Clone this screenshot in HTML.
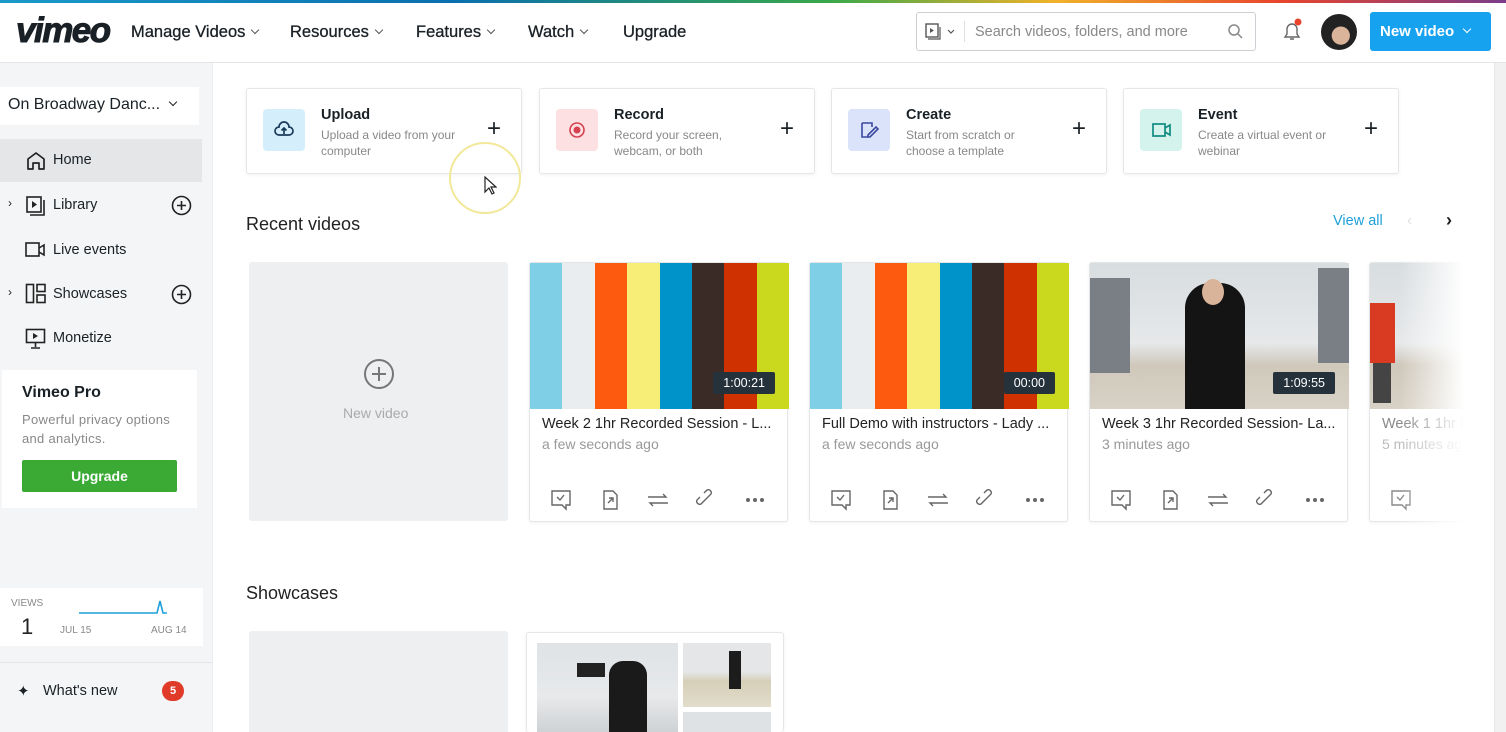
<!DOCTYPE html>
<html><head><meta charset="utf-8"><style>
*{box-sizing:border-box;margin:0;padding:0}
html,body{width:1506px;height:732px;overflow:hidden}
body{background:#fff;font-family:"Liberation Sans",Arial,sans-serif;position:relative;color:#1a2126}
.a{position:absolute}
.topbar{left:0;top:0;width:1506px;height:3px;background:linear-gradient(90deg,#1a9ac9,#0a6fb0 30%,#38a84a 55%,#f1b22a 70%,#e8452c 85%,#7a3c8a)}
.hdr{left:0;top:3px;width:1506px;height:60px;border-bottom:1px solid #e3e5e8}
.nav{top:23px;font-size:16.5px;color:#1a2126;font-weight:normal;-webkit-text-stroke:.3px #1a2126}
.chev{display:inline-block;width:6px;height:6px;border-right:1.3px solid #555;border-bottom:1.3px solid #555;transform:rotate(45deg);margin-left:7px;position:relative;top:-4px;-webkit-text-stroke:0}
.side{left:0;top:63px;width:213px;height:669px;background:#f4f5f6;border-right:1px solid #eceef0}
.si{left:25px;font-size:14.5px;color:#1a2126}
.card{background:#fff;border:1px solid #e4e6e8;border-radius:3px;box-shadow:0 1px 3px rgba(0,0,0,.06)}
.ac .ic{position:absolute;left:16px;top:20px;width:42px;height:42px;border-radius:4px}
.ac .t{position:absolute;left:74px;top:18px;font-size:14.5px;font-weight:700}
.ac .d{position:absolute;left:74px;top:38px;font-size:12px;color:#888;line-height:16px;width:150px}
.ac .p{position:absolute;right:20px;top:26px;font-size:24px;font-weight:300}
.vc{top:262px;width:259px;height:260px}
.th{position:absolute;left:0;top:0;width:259px;height:146px;overflow:hidden;display:flex}
.th i{flex:1}
.dur{position:absolute;right:12px;top:109px;background:#25323c;color:#fff;font-size:12.5px;padding:4px 10px;border-radius:2px}
.vt{position:absolute;left:12px;top:153px;font-size:14.5px;color:#222;white-space:nowrap}
.vs{position:absolute;left:12px;top:173px;font-size:14px;color:#999;white-space:nowrap}
.ico{position:absolute;top:225px}
</style></head><body>
<div class="a topbar"></div>
<div class="a hdr"></div>
<div class="a" style="left:16px;top:11px;font-size:35px;font-weight:900;font-style:italic;letter-spacing:-1.5px;font-family:'Liberation Sans',sans-serif;color:#1a2126;-webkit-text-stroke:1px #1a2126">vimeo</div>
<div class="a nav" style="left:131px">Manage Videos<span class="chev"></span></div>
<div class="a nav" style="left:290px">Resources<span class="chev"></span></div>
<div class="a nav" style="left:416px">Features<span class="chev"></span></div>
<div class="a nav" style="left:528px">Watch<span class="chev"></span></div>
<div class="a nav" style="left:623px">Upgrade</div>
<div class="a" style="left:916px;top:12px;width:340px;height:39px;border:1px solid #ccd0d4;border-radius:3px"></div>
<svg class="a" style="left:924px;top:22px" width="40" height="20"><rect x="2" y="2" width="12" height="13" fill="none" stroke="#555" stroke-width="1.4"/><path d="M6 6l4 2.5-4 2.5z" fill="#555"/><path d="M4 17h12V5" fill="none" stroke="#555" stroke-width="1.2"/><path d="M24 8l3 3 3-3" fill="none" stroke="#555" stroke-width="1.2"/></svg>
<div class="a" style="left:964px;top:21px;width:1px;height:21px;background:#e0e0e0"></div>
<div class="a" style="left:975px;top:24px;font-size:14.5px;color:#888">Search videos, folders, and more</div>
<svg class="a" style="left:1227px;top:23px" width="16" height="16"><circle cx="7" cy="7" r="5" fill="none" stroke="#888" stroke-width="1.5"/><path d="M11 11l4 4" stroke="#888" stroke-width="1.5"/></svg>
<svg class="a" style="left:1280px;top:18px" width="26" height="26"><path d="M5 19h14l-2-3v-5a5 5 0 0 0-10 0v5z M10 21h4" fill="none" stroke="#666" stroke-width="1.4"/><circle cx="18" cy="4" r="3.5" fill="#e8452c"/></svg>
<div class="a" style="left:1321px;top:14px;width:36px;height:36px;border-radius:50%;background:radial-gradient(circle at 55% 60%,#d9b49a 0 30%,#222 32%)"></div>
<div class="a" style="left:1370px;top:12px;width:121px;height:39px;background:#17a2f0;border-radius:3px;color:#fff;font-weight:700;font-size:15px;padding:11px 0 0 10px">New video<span class="chev" style="border-color:#fff;margin-left:10px"></span></div>

<div class="a side"></div>
<div class="a" style="left:0;top:87px;width:199px;height:38px;background:#fff"></div>
<div class="a" style="left:8px;top:96px;font-size:16px">On Broadway Danc...<span class="chev" style="border-color:#222;border-width:1.8px;margin-left:10px"></span></div>
<div class="a" style="left:0;top:139px;width:202px;height:43px;background:#e4e6e8"></div>
<svg class="a" style="left:25px;top:150px" width="22" height="22"><path d="M3 19V9l8-6 8 6v10h-5v-6H8v6z" fill="none" stroke="#222" stroke-width="1.7" stroke-linejoin="round"/></svg>
<div class="a si" style="left:53px;top:152px">Home</div>
<div class="a" style="left:8px;top:196px;font-size:12px">›</div>
<svg class="a" style="left:25px;top:195px" width="22" height="22"><rect x="2" y="2" width="14" height="15" fill="none" stroke="#222" stroke-width="1.6"/><path d="M7 6l5 3.5-5 3.5z" fill="#222"/><path d="M5 20h14V5" fill="none" stroke="#222" stroke-width="1.6"/></svg>
<div class="a si" style="left:53px;top:197px">Library</div>
<svg class="a" style="left:171px;top:195px" width="21" height="21"><circle cx="10.5" cy="10.5" r="9" fill="none" stroke="#222" stroke-width="1.6"/><path d="M10.5 6v9M6 10.5h9" stroke="#222" stroke-width="1.6"/></svg>
<svg class="a" style="left:25px;top:240px" width="22" height="20"><rect x="1" y="3" width="13" height="13" fill="none" stroke="#222" stroke-width="1.6"/><path d="M14 8l5-3v10l-5-3" fill="none" stroke="#222" stroke-width="1.6"/></svg>
<div class="a si" style="left:53px;top:242px">Live events</div>
<div class="a" style="left:8px;top:285px;font-size:12px">›</div>
<svg class="a" style="left:25px;top:283px" width="22" height="22"><rect x="1.5" y="1.5" width="7" height="18" fill="none" stroke="#222" stroke-width="1.6"/><rect x="12" y="1.5" width="8" height="7" fill="none" stroke="#222" stroke-width="1.6"/><rect x="12" y="12" width="8" height="7.5" fill="none" stroke="#222" stroke-width="1.6"/></svg>
<div class="a si" style="left:53px;top:286px">Showcases</div>
<svg class="a" style="left:171px;top:284px" width="21" height="21"><circle cx="10.5" cy="10.5" r="9" fill="none" stroke="#222" stroke-width="1.6"/><path d="M10.5 6v9M6 10.5h9" stroke="#222" stroke-width="1.6"/></svg>
<svg class="a" style="left:25px;top:328px" width="22" height="22"><rect x="1.5" y="1.5" width="18" height="13" fill="none" stroke="#222" stroke-width="1.6"/><path d="M8 5l5 3-5 3z" fill="#222"/><path d="M10.5 15v4M6 20h9" stroke="#222" stroke-width="1.6"/></svg>
<div class="a si" style="left:53px;top:330px">Monetize</div>
<div class="a" style="left:2px;top:370px;width:195px;height:138px;background:#fff"></div>
<div class="a" style="left:22px;top:384px;font-size:16px;font-weight:700">Vimeo Pro</div>
<div class="a" style="left:22px;top:410px;font-size:13px;color:#888;line-height:19px;letter-spacing:.3px">Powerful privacy options<br>and analytics.</div>
<div class="a" style="left:22px;top:460px;width:155px;height:32px;background:#3aaa35;border-radius:2px;color:#fff;font-weight:700;font-size:14px;text-align:center;line-height:32px">Upgrade</div>
<div class="a" style="left:0;top:588px;width:203px;height:58px;background:#fff"></div>
<div class="a" style="left:11px;top:598px;font-size:10px;color:#888">VIEWS</div>
<div class="a" style="left:21px;top:614px;font-size:22px;color:#222">1</div>
<div class="a" style="left:60px;top:625px;font-size:10px;color:#888">JUL 15</div>
<div class="a" style="left:151px;top:625px;font-size:10px;color:#888">AUG 14</div>
<svg class="a" style="left:78px;top:598px" width="94" height="20"><path d="M1 15h78l3-12 3 12h4" fill="none" stroke="#1fa0d8" stroke-width="1.6"/></svg>
<div class="a" style="left:0;top:662px;width:213px;height:1px;background:#e3e5e8"></div>
<div class="a" style="left:17px;top:682px;font-size:15px">✦</div>
<div class="a" style="left:43px;top:683px;font-size:14.5px">What's new</div>
<div class="a" style="left:162px;top:681px;width:22px;height:20px;border-radius:10px;background:#e03a28;color:#fff;font-size:11px;font-weight:700;text-align:center;line-height:20px">5</div>

<div class="a card ac" style="left:246px;top:88px;width:276px;height:86px"><div class="ic" style="background:#d5eefb"></div><svg class="a" style="left:27px;top:31px" width="20" height="20"><path d="M5 15a4 4 0 0 1 0-8 5 5 0 0 1 10 0 4 4 0 0 1 0 8z" fill="none" stroke="#1a3a5a" stroke-width="1.7"/><path d="M10 14V8M7.5 10.5L10 8l2.5 2.5" fill="none" stroke="#1a3a5a" stroke-width="1.7"/></svg><div class="t">Upload</div><div class="d">Upload a video from your computer</div><div class="p">+</div></div>
<div class="a card ac" style="left:539px;top:88px;width:276px;height:86px"><div class="ic" style="background:#fde0e2"></div><svg class="a" style="left:27px;top:31px" width="20" height="20"><circle cx="10" cy="10" r="7" fill="none" stroke="#d5414f" stroke-width="1.6"/><circle cx="10" cy="10" r="3.5" fill="#d5414f"/></svg><div class="t">Record</div><div class="d">Record your screen, webcam, or both</div><div class="p">+</div></div>
<div class="a card ac" style="left:831px;top:88px;width:276px;height:86px"><div class="ic" style="background:#dbe3fa"></div><svg class="a" style="left:27px;top:31px" width="20" height="20"><path d="M3 3h10v4M3 3v14h6" fill="none" stroke="#3a48a0" stroke-width="1.6"/><path d="M9 15l8-8 2 2-8 8H9z" fill="none" stroke="#3a48a0" stroke-width="1.6"/></svg><div class="t">Create</div><div class="d">Start from scratch or choose a template</div><div class="p">+</div></div>
<div class="a card ac" style="left:1123px;top:88px;width:276px;height:86px"><div class="ic" style="background:#d3f3ec"></div><svg class="a" style="left:27px;top:31px" width="22" height="20"><rect x="2" y="4" width="12" height="12" fill="none" stroke="#128a80" stroke-width="1.7"/><path d="M14 8l5-3v10l-5-3" fill="none" stroke="#128a80" stroke-width="1.7"/></svg><div class="t">Event</div><div class="d">Create a virtual event or webinar</div><div class="p">+</div></div>

<div class="a" style="left:449px;top:142px;width:72px;height:72px;border-radius:50%;border:2px solid #f2e89a"></div>
<svg class="a" style="left:483px;top:176px" width="14" height="20"><path d="M2 1v15l4-4 3 6 2-1-3-6h5z" fill="#fff" stroke="#222" stroke-width="1.2"/></svg>

<div class="a" style="left:246px;top:214px;font-size:18px;color:#222">Recent videos</div>
<div class="a" style="left:1333px;top:213px;font-size:14.5px;color:#1f9fd8">View all</div>
<div class="a" style="left:1407px;top:212px;font-size:15px;color:#ddd">‹</div>
<div class="a" style="left:1446px;top:210px;font-size:18px;color:#222;font-weight:700">›</div>

<div class="a" style="left:249px;top:262px;width:259px;height:259px;background:#eeeff0;border-radius:3px"></div>
<svg class="a" style="left:363px;top:358px" width="32" height="32"><circle cx="16" cy="16" r="14" fill="none" stroke="#777" stroke-width="2"/><path d="M16 9v14M9 16h14" stroke="#777" stroke-width="2"/></svg>
<div class="a" style="left:343px;top:405px;font-size:14px;color:#aaa">New video</div>

<div class="a card vc" style="left:529px"><div class="th"><i style="background:#7fd0e6"></i><i style="background:#e9edf0"></i><i style="background:#fd5a0f"></i><i style="background:#f6ee77"></i><i style="background:#0093c9"></i><i style="background:#3b2b27"></i><i style="background:#cf3200"></i><i style="background:#cbd91e"></i></div><div class="dur">1:00:21</div><div class="vt">Week 2 1hr Recorded Session - L...</div><div class="vs">a few seconds ago</div>
<svg class="ico" style="left:20px" width="240" height="24"><g fill="none" stroke="#666" stroke-width="1.4"><path d="M2 3h18v14h-4v4l-4-4H2z"/><path d="M7 9l3 3 4-5"/><path d="M54 3h9l4 4v14H54z"/><path d="M58 15l5-5M59 10h4v4"/><path d="M98 9h18l-3-3M118 15H100l3 3"/><path d="M155 12l-4 4a3 3 0 0 1-4-4l3-3M157 10l4-4a3 3 0 0 0-4-4l-3 3M153 14l4-4"/></g><g fill="#666"><circle cx="198" cy="12" r="2"/><circle cx="205" cy="12" r="2"/><circle cx="212" cy="12" r="2"/></g></svg></div>
<div class="a card vc" style="left:809px"><div class="th"><i style="background:#7fd0e6"></i><i style="background:#e9edf0"></i><i style="background:#fd5a0f"></i><i style="background:#f6ee77"></i><i style="background:#0093c9"></i><i style="background:#3b2b27"></i><i style="background:#cf3200"></i><i style="background:#cbd91e"></i></div><div class="dur">00:00</div><div class="vt">Full Demo with instructors - Lady ...</div><div class="vs">a few seconds ago</div>
<svg class="ico" style="left:20px" width="240" height="24"><g fill="none" stroke="#666" stroke-width="1.4"><path d="M2 3h18v14h-4v4l-4-4H2z"/><path d="M7 9l3 3 4-5"/><path d="M54 3h9l4 4v14H54z"/><path d="M58 15l5-5M59 10h4v4"/><path d="M98 9h18l-3-3M118 15H100l3 3"/><path d="M155 12l-4 4a3 3 0 0 1-4-4l3-3M157 10l4-4a3 3 0 0 0-4-4l-3 3M153 14l4-4"/></g><g fill="#666"><circle cx="198" cy="12" r="2"/><circle cx="205" cy="12" r="2"/><circle cx="212" cy="12" r="2"/></g></svg></div>
<div class="a card vc" style="left:1089px"><div class="th" style="background:linear-gradient(180deg,#d8dde0 0,#e6e8ea 55%,#cfc8bb 70%,#d8d2c6 100%)"><div class="a" style="left:0;top:15px;width:40px;height:95px;background:#7a7f86"></div><div class="a" style="left:228px;top:5px;width:31px;height:95px;background:#7a7f86"></div><div class="a" style="left:95px;top:20px;width:60px;height:126px;background:#141414;border-radius:25px 25px 0 0"></div><div class="a" style="left:112px;top:16px;width:22px;height:26px;background:#d9b49a;border-radius:50%"></div></div><div class="dur">1:09:55</div><div class="vt">Week 3 1hr Recorded Session- La...</div><div class="vs">3 minutes ago</div>
<svg class="ico" style="left:20px" width="240" height="24"><g fill="none" stroke="#666" stroke-width="1.4"><path d="M2 3h18v14h-4v4l-4-4H2z"/><path d="M7 9l3 3 4-5"/><path d="M54 3h9l4 4v14H54z"/><path d="M58 15l5-5M59 10h4v4"/><path d="M98 9h18l-3-3M118 15H100l3 3"/><path d="M155 12l-4 4a3 3 0 0 1-4-4l3-3M157 10l4-4a3 3 0 0 0-4-4l-3 3M153 14l4-4"/></g><g fill="#666"><circle cx="198" cy="12" r="2"/><circle cx="205" cy="12" r="2"/><circle cx="212" cy="12" r="2"/></g></svg></div>
<div class="a card vc" style="left:1369px;width:100px;overflow:hidden"><div class="th" style="background:linear-gradient(180deg,#d8dde0 0,#e6e8ea 55%,#cfc8bb 70%,#d8d2c6 100%)"><div class="a" style="left:0;top:40px;width:25px;height:60px;background:#d93a22"></div><div class="a" style="left:3px;top:100px;width:18px;height:40px;background:#444"></div></div><div class="vt" style="color:#888">Week 1 1hr R</div><div class="vs" style="color:#bbb">5 minutes ago</div>
<svg class="ico" style="left:20px" width="80" height="24"><path d="M2 3h18v14h-4v4l-4-4H2z M7 9l3 3 4-5" fill="none" stroke="#888" stroke-width="1.4"/></svg></div>
<div class="a" style="left:1400px;top:255px;width:80px;height:275px;background:linear-gradient(90deg,rgba(255,255,255,0),#fff 80%)"></div>
<div class="a" style="left:1494px;top:63px;width:12px;height:669px;background:#f1f1f1;border-left:1px solid #e6e6e6"></div>

<div class="a" style="left:246px;top:583px;font-size:18px;color:#222">Showcases</div>
<div class="a" style="left:249px;top:631px;width:259px;height:101px;background:#eeeff0;border-radius:3px 3px 0 0"></div>
<div class="a card" style="left:526px;top:632px;width:258px;height:100px;border-bottom:none"></div>
<div class="a" style="left:537px;top:643px;width:141px;height:89px;overflow:hidden;background:linear-gradient(180deg,#dfe3e6 0,#e7e9eb 60%,#cfd2d4 100%)"><div class="a" style="left:72px;top:18px;width:38px;height:80px;background:#1a1a1a;border-radius:14px 14px 0 0"></div><div class="a" style="left:40px;top:20px;width:28px;height:14px;background:#222"></div></div>
<div class="a" style="left:683px;top:643px;width:88px;height:64px;background:linear-gradient(180deg,#e4e6e8 0,#e4e6e8 45%,#d6cfb8 60%,#e2dccb 100%)"><div class="a" style="left:46px;top:8px;width:12px;height:38px;background:#1c1c1c"></div></div>
<div class="a" style="left:683px;top:712px;width:88px;height:20px;background:#dfe2e4"></div>
</body></html>
